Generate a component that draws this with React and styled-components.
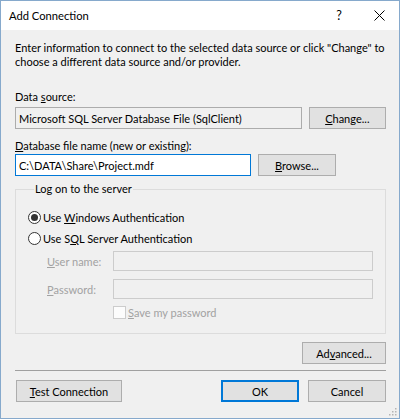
import React, { useState } from "react";
import styled, { createGlobalStyle } from "styled-components";

const GlobalStyle = createGlobalStyle`
  html, body { margin: 0; padding: 0; background: #f0f0f0; }
  body { font-family: Lato, "Noto Sans", sans-serif; font-size: 11px; color: #000; }
  * { box-sizing: border-box; }
`;

// ===== 창 틀 =====
const Window = styled.div`
  position: relative;
  width: 400px;
  height: 419px;
  border: 1px solid #86a9cc;
  display: flex;
  flex-direction: column;
  background: #f0f0f0;
`;

const TitleBar = styled.div`
  height: 29px;
  background: #fff;
  display: flex;
  align-items: center;
  padding-left: 8px;
`;

const Title = styled.span`
  flex: 1;
  font-size: 11.2px;
  color: #000;
`;

const TitleButton = styled.div`
  width: 40px;
  height: 29px;
  display: flex;
  align-items: center;
  justify-content: center;
  font-size: 12.5px;
  color: #000;
`;

const Body = styled.div`
  flex: 1;
  padding: 11px 13px 0 14px;
  display: flex;
  flex-direction: column;
`;

const Text = styled.div`
  line-height: 14px;
  white-space: nowrap;
  color: ${({ $disabled }) => ($disabled ? "#a2a2a2" : "#000")};
  margin-top: ${({ $mt }) => $mt || 0}px;
`;

const Row = styled.div`
  display: flex;
  align-items: center;
  justify-content: ${({ $end }) => ($end ? "flex-end" : "flex-start")};
  gap: 7px;
  margin-top: ${({ $mt }) => $mt || 0}px;
`;

const Field = styled.div`
  width: ${({ $w }) => $w}px;
  height: 22px;
  border: 1px solid ${({ $focus }) => ($focus ? "#0078d7" : "#acacac")};
  background: ${({ $readonly }) => ($readonly ? "#f0f0f0" : "#fff")};
  display: flex;
  align-items: center;
  padding-left: 3px;
  white-space: nowrap;
  overflow: hidden;
`;

const Button = styled.button`
  width: ${({ $w }) => $w || 78}px;
  height: 22px;
  padding: 0;
  background: #e1e1e1;
  border: ${({ $default }) => ($default ? "2px solid #0078d7" : "1px solid #adadad")};
  font-family: inherit;
  font-size: 11px;
  color: #000;
  cursor: default;
  margin-left: ${({ $ml }) => $ml || 0}px;
`;

// ===== 그룹 박스 =====
const Group = styled.fieldset`
  margin: 6px 0 0 0;
  padding: 0 12px 14px 12px;
  border: 1px solid #dcdcdc;
  min-width: 0;
`;

const Legend = styled.legend`
  margin-left: 6px;
  padding: 0 1px;
  line-height: 14px;
`;

const RadioRow = styled.div`
  height: 21px;
  display: flex;
  align-items: center;
  gap: 2px;
  margin-top: ${({ $mt }) => $mt || 0}px;
`;

const RadioCircle = styled.span`
  width: 13px;
  height: 13px;
  border-radius: 50%;
  border: 1px solid #333;
  background: #fff;
  display: flex;
  align-items: center;
  justify-content: center;
  &::after {
    content: "";
    width: 7px;
    height: 7px;
    border-radius: 50%;
    background: ${({ $checked }) => ($checked ? "#333" : "transparent")};
  }
`;

const CredGrid = styled.div`
  display: grid;
  grid-template-columns: 85px 1fr;
  row-gap: 8px;
  align-items: center;
  margin-top: 2px;
`;

const CredLabel = styled.div`
  padding-left: 19px;
  color: #a2a2a2;
  white-space: nowrap;
`;

const DisabledInput = styled.div`
  height: 20px;
  border: 1px solid #cccccc;
  background: #f0f0f0;
`;

const CheckRow = styled.div`
  display: flex;
  align-items: center;
  gap: 2px;
  padding-left: 85px;
  margin-top: 7px;
  height: 13px;
  color: #a2a2a2;
`;

const CheckBox = styled.span`
  width: 13px;
  height: 13px;
  border: 1px solid #cccccc;
  background: #fcfcfc;
`;

const Separator = styled.div`
  height: 1px;
  background: #a0a0a0;
  margin-top: 6px;
`;

const Spacer = styled.div`
  flex: 1;
`;

const Grip = styled.svg`
  position: absolute;
  right: 2px;
  bottom: 2px;
`;

function CloseIcon() {
  return (
    <svg width="11" height="11" viewBox="0 0 11 11">
      <path d="M0.5 0.5 L10.5 10.5 M10.5 0.5 L0.5 10.5" stroke="#000" strokeWidth="1" fill="none" />
    </svg>
  );
}

export default function App() {
  const [auth] = useState("windows");
  return (
    <>
      <GlobalStyle />
      <Window>
        <TitleBar>
          <Title>Add Connection</Title>
          <TitleButton>?</TitleButton>
          <TitleButton>
            <CloseIcon />
          </TitleButton>
        </TitleBar>

        <Body>
          <Text>
            Enter information to connect to the selected data source or click "Change" to
            <br />
            choose a different data source and/or provider.
          </Text>

          <Text $mt={21}>
            Data <u>s</u>ource:
          </Text>
          <Row $mt={3}>
            <Field $w={289} $readonly>Microsoft SQL Server Database File (SqlClient)</Field>
            <Button>
              <u>C</u>hange...
            </Button>
          </Row>

          <Text $mt={10}>
            <u>D</u>atabase file name (new or existing):
          </Text>
          <Row $mt={1}>
            <Field $w={236} $focus>C:\DATA\Share\Project.mdf</Field>
            <Button>
              <u>B</u>rowse...
            </Button>
          </Row>

          <Group>
            <Legend>Log on to the server</Legend>
            <RadioRow $mt={11}>
              <RadioCircle $checked={auth === "windows"} />
              <span>
                Use <u>W</u>indows Authentication
              </span>
            </RadioRow>
            <RadioRow>
              <RadioCircle $checked={auth === "sql"} />
              <span>
                Use S<u>Q</u>L Server Authentication
              </span>
            </RadioRow>
            <CredGrid>
              <CredLabel>
                <u>U</u>ser name:
              </CredLabel>
              <DisabledInput />
              <CredLabel>
                <u>P</u>assword:
              </CredLabel>
              <DisabledInput />
            </CredGrid>
            <CheckRow>
              <CheckBox />
              <span>
                <u>S</u>ave my password
              </span>
            </CheckRow>
          </Group>

          <Row $mt={8} $end>
            <Button $w={84}>
              Ad<u>v</u>anced...
            </Button>
          </Row>

          <Separator />

          <Row $mt={9}>
            <Button $w={106} $ml={1}>
              <u>T</u>est Connection
            </Button>
            <Spacer />
            <Button $w={78} $default>
              OK
            </Button>
            <Button $w={78} $ml={2}>
              Cancel
            </Button>
          </Row>
        </Body>

        <Grip width="9" height="9" viewBox="0 0 9 9">
          <rect x="7" y="1" width="1.5" height="1.5" fill="#b5b5b5" />
          <rect x="4" y="4" width="1.5" height="1.5" fill="#b5b5b5" />
          <rect x="7" y="4" width="1.5" height="1.5" fill="#b5b5b5" />
          <rect x="1" y="7" width="1.5" height="1.5" fill="#b5b5b5" />
          <rect x="4" y="7" width="1.5" height="1.5" fill="#b5b5b5" />
          <rect x="7" y="7" width="1.5" height="1.5" fill="#b5b5b5" />
        </Grip>
      </Window>
    </>
  );
}
